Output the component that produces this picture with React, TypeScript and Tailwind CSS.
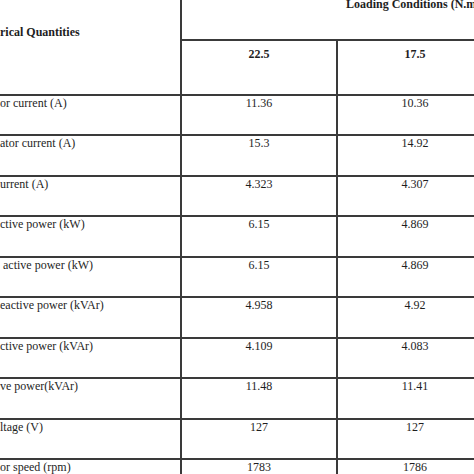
const rows = [
  { label: 'or current (A)', a: '11.36', b: '10.36' },
  { label: 'ator current (A)', a: '15.3', b: '14.92' },
  { label: 'urrent (A)', a: '4.323', b: '4.307' },
  { label: 'ctive power (kW)', a: '6.15', b: '4.869' },
  { label: ' active power (kW)', a: '6.15', b: '4.869' },
  { label: 'eactive power (kVAr)', a: '4.958', b: '4.92' },
  { label: 'ctive power (kVAr)', a: '4.109', b: '4.083' },
  { label: 've power(kVAr)', a: '11.48', b: '11.41' },
  { label: 'ltage (V)', a: '127', b: '127' },
  { label: 'or speed (rpm)', a: '1783', b: '1786' },
];

const App = () => {
  return (
    <div className="w-[474px] h-[474px] overflow-hidden bg-white text-[#1e1e1e] font-[family-name:'Liberation_Serif',serif] text-[12px] leading-[14px]">
      <div className="w-[650px]">
        {/* header */}
        <div className="flex h-[96px] border-b-2 border-[#3a3a3a]">
          <div className="w-[182px] shrink-0 border-r-2 border-[#3a3a3a] pt-[25px] font-bold whitespace-pre">
            rical Quantities
          </div>
          <div className="flex flex-col">
            <div className="h-[41px] border-b-2 border-[#3a3a3a] w-[312px]">
              <div className="mt-[-3px] pl-[164px] font-bold whitespace-nowrap">Loading Conditions (N.m)</div>
            </div>
            <div className="flex flex-1">
              <div className="w-[156px] border-r-2 border-[#3a3a3a] pt-[6px] text-center font-bold">22.5</div>
              <div className="w-[156px] border-r-2 border-[#3a3a3a] pt-[6px] text-center font-bold">17.5</div>
            </div>
          </div>
        </div>

        {/* data rows */}
        {rows.map((row, i) => (
          <div key={i} className="flex h-[40.44px] border-b-2 border-[#3a3a3a]">
            <div className="w-[182px] shrink-0 border-r-2 border-[#3a3a3a] whitespace-pre">{row.label}</div>
            <div className="w-[156px] shrink-0 border-r-2 border-[#3a3a3a] text-center">{row.a}</div>
            <div className="w-[156px] shrink-0 border-r-2 border-[#3a3a3a] text-center">{row.b}</div>
          </div>
        ))}
      </div>
    </div>
  );
};

export default App;
